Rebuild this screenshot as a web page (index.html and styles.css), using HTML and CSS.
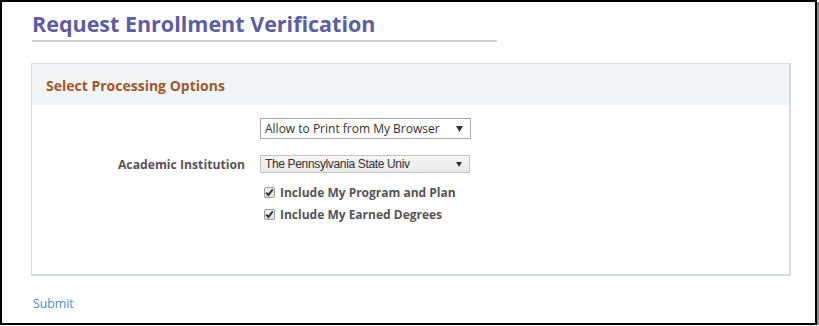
FILE: index.html
```html
<!DOCTYPE html>
<html>
<head>
<meta charset="utf-8">
<link rel="stylesheet" href="styles.css">
</head>
<body>
<div class="frame">
  <h1 class="title">Request Enrollment Verification</h1>
  <div class="panel">
    <div class="panel-head">Select Processing Options</div>
    <div class="panel-body">
      <div class="row">
        <div class="label"></div>
        <div class="select sel1"><span>Allow to Print from My Browser</span><svg class="arrow" viewBox="0 0 7 6" width="7" height="6"><path d="M0 0 H7 L3.5 6 Z" fill="#333"/></svg></div>
      </div>
      <div class="row row2">
        <div class="label">Academic Institution</div>
        <div class="select sel2"><span>The Pennsylvania State Univ</span><svg class="arrow" viewBox="0 0 7 6" width="6" height="5"><path d="M0 0 H7 L3.5 6 Z" fill="#333"/></svg></div>
      </div>
      <div class="checks">
        <label class="check"><span class="box"><svg viewBox="0 0 11 11" width="11" height="11"><path d="M2.2 5.6 L4.4 8 L8.8 2.4" fill="none" stroke="#333" stroke-width="2"/></svg></span>Include My Program and Plan</label>
        <label class="check"><span class="box"><svg viewBox="0 0 11 11" width="11" height="11"><path d="M2.2 5.6 L4.4 8 L8.8 2.4" fill="none" stroke="#333" stroke-width="2"/></svg></span>Include My Earned Degrees</label>
      </div>
    </div>
  </div>
  <a class="submit" href="#">Submit</a>
</div>
</body>
</html>
```
FILE: styles.css
```css
html, body { margin: 0; padding: 0; background: #fff; }
body { font-family: "Open Sans", "Liberation Sans", sans-serif; }
.frame {
  width: 813px;
  height: 321px;
  border: 2px solid #000;
  box-shadow: 2px 2px 0 #8a8a8a;
  position: relative;
  padding: 0;
  box-sizing: content-box;
}
.title {
  margin: 8px 0 0 30px;
  width: 465px;
  font-size: 21.5px;
  font-weight: 700;
  color: #5b5ea6;
  line-height: 28px;
  padding-bottom: 2px;
  border-bottom: 2px solid #d0d0d0;
}
.panel {
  margin: 21px 0 0 29px;
  width: 757px;
  height: 210px;
  border: 1px solid #d9dcdf;
  border-width: 1px 2px 2px 1px;
}
.panel-head {
  background: #f2f5f6;
  height: 41px;
  padding-left: 14px;
  font-size: 14px;
  font-weight: 700;
  color: #a0572b;
  line-height: 43px;
}
.panel-body { padding-top: 13px; }
.row { display: flex; align-items: center; height: 21px; }
.row2 { margin-top: 16px; height: 18px; }
.label {
  width: 213px;
  text-align: right;
  padding-right: 15px;
  font-size: 12.2px;
  font-weight: 700;
  color: #555;
}
.select {
  display: flex;
  justify-content: space-between;
  align-items: center;
  box-sizing: border-box;
  border: 1px solid #a9a9a9;
  color: #333;
  padding: 0 7px 0 4px;
}
.sel1 {
  width: 211px; height: 21px;
  font-size: 12px;
  background: #fff;
}
.sel2 {
  width: 210px; height: 18px;
  font-family: "Liberation Sans", Arial, sans-serif;
  font-size: 12px;
  letter-spacing: -0.35px;
  background: linear-gradient(#f6f6f6, #e9e9e9);
  border-color: #c4c4c4;
}
.checks { margin-left: 232px; margin-top: 13px; display: flex; flex-direction: column; gap: 9px; }
.check {
  display: flex; align-items: center;
  font-size: 12px; font-weight: 700; color: #555;
  height: 13px;
}
.box {
  width: 11px; height: 11px;
  box-sizing: border-box;
  border: 1px solid #9a9a9a;
  border-radius: 2px;
  background: linear-gradient(#f4f4f4, #dedede);
  margin-right: 5px;
  display: inline-flex;
  position: relative;
}
.box svg { position: absolute; left: -1px; top: -1px; }
.submit {
  display: inline-block;
  margin: 19px 0 0 31px;
  font-size: 12.3px;
  color: #4a8fd0;
  text-decoration: none;
}
```
